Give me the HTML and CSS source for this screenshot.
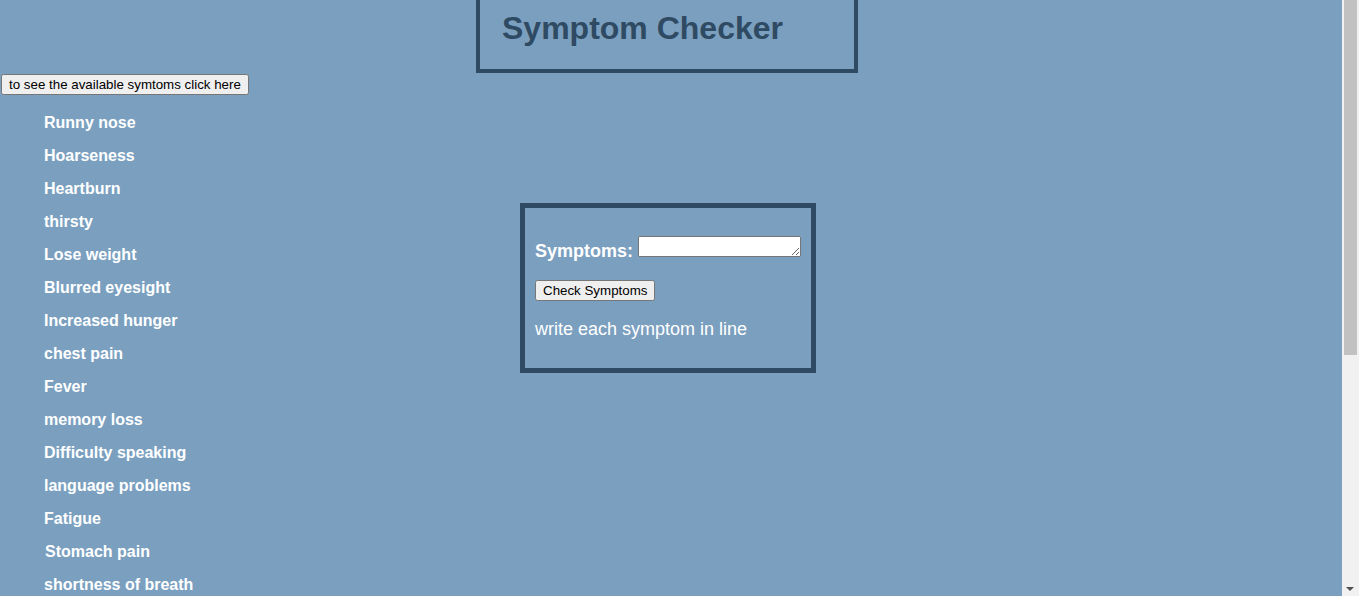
FILE: index.html
```html
<!DOCTYPE html>
<html lang="en">
<head>
    <meta charset="UTF-8">
    <meta name="viewport" content="width=device-width, initial-scale=1.0">
    <title>Symptom Checker</title>
    <link rel="stylesheet" href="styles.css">
</head>
<body>
    <div class="page">
        <div class="main">
            <div class="header">
                <h1 class="title">Symptom Checker</h1>
            </div>

            <button type="button" class="show-btn">to see the available symtoms click here</button>

            <div class="content">
                <ul class="symptoms">
                    <li>Runny nose</li>
                    <li>Hoarseness</li>
                    <li>Heartburn</li>
                    <li>thirsty</li>
                    <li>Lose weight</li>
                    <li>Blurred eyesight</li>
                    <li>Increased hunger</li>
                    <li>chest pain</li>
                    <li>Fever</li>
                    <li>memory loss</li>
                    <li>Difficulty speaking</li>
                    <li>language problems</li>
                    <li>Fatigue</li>
                    <li class="shift">Stomach pain</li>
                    <li>shortness of breath</li>
                </ul>

                <form class="checker">
                    <p class="field">
                        <label for="symptoms">Symptoms:</label>
                        <textarea id="symptoms" name="symptoms" rows="1"></textarea>
                    </p>
                    <button type="submit">Check Symptoms</button>
                    <p class="hint">write each symptom in line</p>
                </form>
            </div>
        </div>

        <!-- page scrollbar -->
        <div class="scrollbar">
            <div class="thumb"></div>
            <div class="arrow"></div>
        </div>
    </div>
</body>
</html>
```

FILE: styles.css
```css
html, body {
    height: 100%;
    overflow: hidden;
}
body {
    margin: 0;
    font-family: "Liberation Sans", Arial, sans-serif;
    background-color: #7b9fbf;
    color: white;
}
.page {
    display: flex;
    height: 100%;
}
.main {
    flex: 1;
    min-width: 0;
    overflow: hidden;
}
.header {
    display: flex;
    justify-content: center;
    padding-right: 8px;
}
.title {
    width: 382px;
    box-sizing: border-box;
    margin: 0;
    padding: 10px 0 22px 22px;
    border: 4px solid #2f4a63;
    border-top: none;
    font-size: 32px;
    color: #2f4a63;
}
.show-btn {
    display: block;
    margin: 1px 0 0 1px;
    font-family: "Liberation Sans", Arial, sans-serif;
}
.content {
    display: grid;
    grid-template-columns: 1fr auto 1fr;
}
.symptoms {
    list-style: none;
    margin: 11px 0 0;
    padding-left: 44px;
}
.symptoms li {
    font-weight: bold;
    font-size: 16px;
    line-height: 33px;
    white-space: nowrap;
}
.symptoms li.shift {
    padding-left: 1px;
}
.checker {
    align-self: start;
    width: 296px;
    box-sizing: border-box;
    margin: 108px 6px 0 0;
    padding: 10px;
    border: 5px solid #2f4a63;
}
.checker p {
    margin: 18px 0;
    font-size: 18px;
}
.field {
    white-space: nowrap;
}
.field label {
    font-weight: bold;
}
.field textarea {
    width: 163px;
    height: 21px;
    box-sizing: border-box;
    vertical-align: baseline;
}
.checker button {
    font-family: "Liberation Sans", Arial, sans-serif;
}
.scrollbar {
    position: relative;
    flex: 0 0 17px;
    background: #f1f1f1;
}
.thumb {
    height: 355px;
    margin: 0 2px;
    background: #c1c1c1;
}
.arrow {
    position: absolute;
    left: 4px;
    bottom: 5px;
    border-left: 4px solid transparent;
    border-right: 4px solid transparent;
    border-top: 4px solid #505050;
}
```
